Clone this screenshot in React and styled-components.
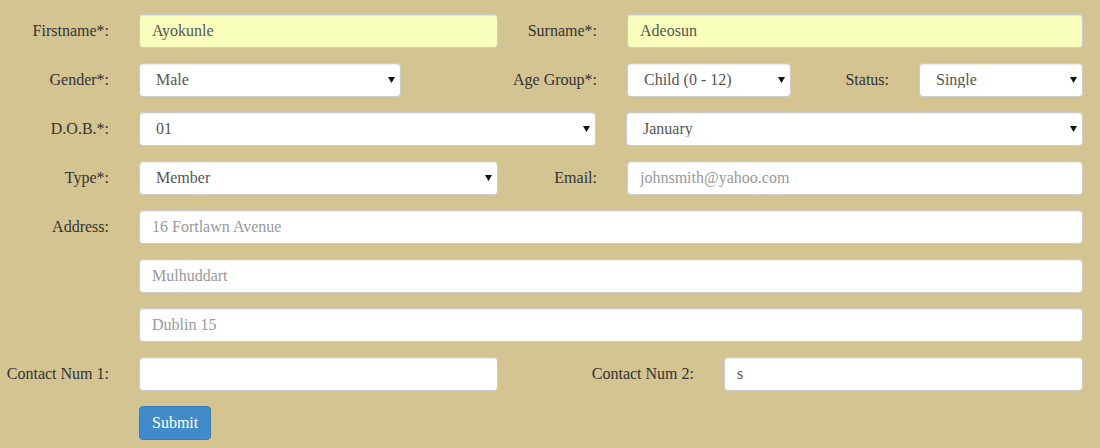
import React from "react";
import styled, { createGlobalStyle } from "styled-components";

const Global = createGlobalStyle`
  html, body { margin: 0; padding: 0; background: #d4c491; }
  body { font-family: "Liberation Serif", "Times New Roman", serif; font-size: 16px; color: #333; }
  * { box-sizing: border-box; }
`;

const Form = styled.form`
  width: 1098px;
  padding-top: 14px;
  display: flex;
  flex-direction: column;
  gap: 15px;
`;

const Row = styled.div`
  display: flex;
  align-items: center;
`;

const Cell = styled.div`
  flex: 0 0 ${(p) => p.$w}px;
  width: ${(p) => p.$w}px;
  padding: 0 15px;
`;

const Label = styled.label`
  flex: 0 0 ${(p) => p.$w}px;
  width: ${(p) => p.$w}px;
  padding: 0 15px 0 0;
  text-align: right;
  font-size: 16px;
  color: #333;
  white-space: nowrap;
`;

const Input = styled.input`
  display: block;
  width: 100%;
  height: 34px;
  padding: 6px 12px;
  border: 1px solid #ccc;
  border-radius: 4px;
  background: ${(p) => (p.$filled ? "#fafebd" : "#fff")};
  font-family: "Liberation Serif", "Times New Roman", serif;
  font-size: 16px;
  color: #555;
  outline: none;
  box-shadow: inset 0 1px 1px rgba(0, 0, 0, 0.075);
  &::placeholder { color: #999; }
`;

const SelectWrap = styled.div`
  position: relative;
`;

const Select = styled.select`
  display: block;
  width: 100%;
  height: 34px;
  padding: 5px 24px 6px 16px;
  border: 1px solid #ccc;
  border-radius: 4px;
  background: #fff;
  font-family: "Liberation Serif", "Times New Roman", serif;
  font-size: 16px;
  color: #555;
  appearance: none;
  -webkit-appearance: none;
  outline: none;
  box-shadow: inset 0 1px 1px rgba(0, 0, 0, 0.075);
`;

const Arrow = styled.svg`
  position: absolute;
  right: 6px;
  top: 14px;
  width: 7px;
  height: 6px;
  pointer-events: none;
`;

const Button = styled.button`
  height: 34px;
  padding: 6px 12px;
  border: 1px solid #357ebd;
  border-radius: 4px;
  background: #428bca;
  color: #fff;
  font-family: "Liberation Serif", "Times New Roman", serif;
  font-size: 16px;
  cursor: pointer;
`;

const Dropdown = ({ value, options }) => (
  <SelectWrap>
    <Select defaultValue={value}>
      {options.map((o) => (
        <option key={o}>{o}</option>
      ))}
    </Select>
    <Arrow viewBox="0 0 7 6">
      <path d="M0 0 H7 L3.5 6 Z" fill="#111" />
    </Arrow>
  </SelectWrap>
);

export default function App() {
  return (
    <>
      <Global />
      <Form onSubmit={(e) => e.preventDefault()}>
        <Row>
          <Label $w={124}>Firstname*:</Label>
          <Cell $w={389}><Input $filled defaultValue="Ayokunle" /></Cell>
          <Label $w={99}>Surname*:</Label>
          <Cell $w={486}><Input $filled defaultValue="Adeosun" /></Cell>
        </Row>
        <Row>
          <Label $w={124}>Gender*:</Label>
          <Cell $w={292}><Dropdown value="Male" options={["Male", "Female"]} /></Cell>
          <Cell $w={97} />
          <Label $w={99}>Age Group*:</Label>
          <Cell $w={194}><Dropdown value="Child (0 - 12)" options={["Child (0 - 12)", "Teen (13 - 19)", "Adult (20+)"]} /></Cell>
          <Label $w={98}>Status:</Label>
          <Cell $w={194}><Dropdown value="Single" options={["Single", "Married"]} /></Cell>
        </Row>
        <Row>
          <Label $w={124}>D.O.B.*:</Label>
          <Cell $w={487}><Dropdown value="01" options={["01", "02", "03"]} /></Cell>
          <Cell $w={487}><Dropdown value="January" options={["January", "February", "March"]} /></Cell>
        </Row>
        <Row>
          <Label $w={124}>Type*:</Label>
          <Cell $w={389}><Dropdown value="Member" options={["Member", "Visitor"]} /></Cell>
          <Label $w={99}>Email:</Label>
          <Cell $w={486}><Input placeholder="johnsmith@yahoo.com" /></Cell>
        </Row>
        <Row>
          <Label $w={124}>Address:</Label>
          <Cell $w={974}><Input placeholder="16 Fortlawn Avenue" /></Cell>
        </Row>
        <Row>
          <Cell $w={124} />
          <Cell $w={974}><Input placeholder="Mulhuddart" /></Cell>
        </Row>
        <Row>
          <Cell $w={124} />
          <Cell $w={974}><Input placeholder="Dublin 15" /></Cell>
        </Row>
        <Row>
          <Label $w={124}>Contact Num 1:</Label>
          <Cell $w={389}><Input /></Cell>
          <Label $w={196}>Contact Num 2:</Label>
          <Cell $w={389}><Input defaultValue="s" /></Cell>
        </Row>
        <Row>
          <Cell $w={124} />
          <Cell $w={200}><Button type="submit">Submit</Button></Cell>
        </Row>
      </Form>
    </>
  );
}
